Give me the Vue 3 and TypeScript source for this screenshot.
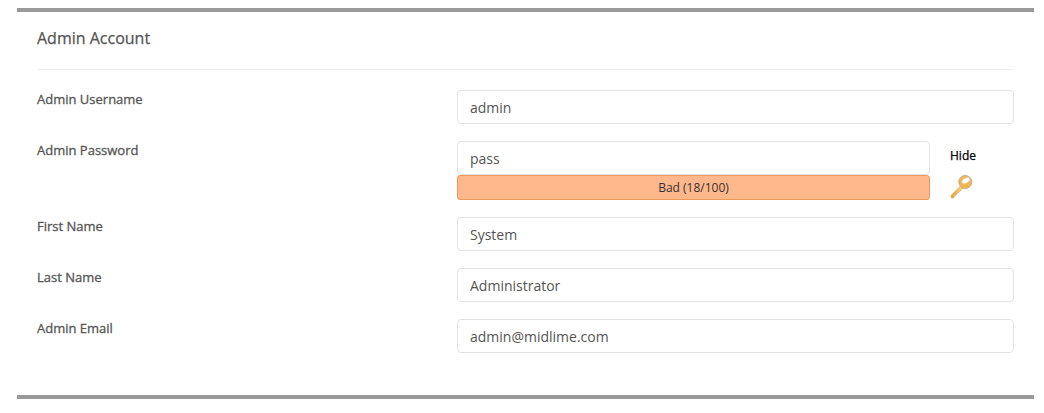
<template>
  <section class="panel">
    <h2 class="title">Admin Account</h2>

    <div v-for="field in fields" :key="field.label" class="row">
      <label class="label">{{ field.label }}</label>

      <div v-if="field.strength" class="password">
        <div class="password-main">
          <input class="input" type="text" :value="field.value" />
          <div class="meter">{{ field.strength }}</div>
        </div>
        <div class="password-side">
          <a class="hide">Hide</a>
          <svg class="key" width="24" height="24" viewBox="0 0 24 24">
            <defs>
              <linearGradient id="keyGold" x1="0" y1="1" x2="1" y2="0">
                <stop offset="0" stop-color="#e09a3a" />
                <stop offset="0.6" stop-color="#f8c25c" />
                <stop offset="1" stop-color="#ffe09a" />
              </linearGradient>
            </defs>
            <path d="M11 10.2 1 20.4l.2 2.4 2.2.1 1.2-1.3v-1.3h1.3l1-1.1v-1.2h1.2l5-5z" fill="url(#keyGold)" stroke="#d9a050" stroke-width=".5" />
            <circle cx="15.3" cy="7" r="6.5" fill="#f6b54a" stroke="#c9aa80" />
            <ellipse cx="15.9" cy="5.6" rx="4.4" ry="2.6" fill="#fff" stroke="#dcc49e" stroke-width=".7" transform="rotate(-30 15.9 5.6)" />
          </svg>
        </div>
      </div>

      <input v-else class="input" type="text" :value="field.value" />
    </div>
  </section>
</template>

<script setup lang="ts">
interface Field {
  label: string
  value: string
  strength?: string
}

const fields: Field[] = [
  { label: 'Admin Username', value: 'admin' },
  { label: 'Admin Password', value: 'pass', strength: 'Bad (18/100)' },
  { label: 'First Name', value: 'System' },
  { label: 'Last Name', value: 'Administrator' },
  { label: 'Admin Email', value: 'admin@midlime.com' }
]
</script>

<style>
html,
body {
  background: #fff;
}
</style>

<style scoped>
.panel {
  box-sizing: border-box;
  width: 1017px;
  height: 391px;
  margin: 8px 0 0 17px;
  padding: 0 20px;
  border-top: 4px solid #999;
  border-bottom: 4px solid #999;
  font-family: 'Open Sans', 'Liberation Sans', sans-serif;
  color: #555;
}

.title {
  height: 58px;
  margin: 0 0 20px;
  padding-top: 15px;
  box-sizing: border-box;
  border-bottom: 1px solid #eee;
  font-size: 16px;
  font-weight: 400;
  line-height: 22px;
  color: #555;
  -webkit-text-stroke: 0.25px #555;
}

.row {
  display: grid;
  grid-template-columns: 420px 557px;
  margin-bottom: 17px;
}

.label {
  font-size: 13px;
  font-weight: 400;
  line-height: 18px;
  color: #555;
  -webkit-text-stroke: 0.3px #555;
}

.input {
  display: block;
  box-sizing: border-box;
  width: 100%;
  height: 34px;
  padding: 0 12px;
  border: 1px solid #e3e3e3;
  border-radius: 4px;
  outline: none;
  background: #fff;
  font-family: inherit;
  font-size: 14px;
  color: #555;
}

.password {
  display: flex;
}

.password-main {
  width: 473px;
}

.meter {
  box-sizing: border-box;
  height: 25px;
  border: 1px solid #f0975a;
  border-radius: 3px;
  background: #ffb78c;
  font-size: 12px;
  line-height: 23px;
  text-align: center;
  color: #333;
}

.password-side {
  display: flex;
  flex-direction: column;
  padding: 7px 0 0 20px;
}

.hide {
  font-size: 12px;
  font-weight: 400;
  line-height: 16px;
  color: #000;
  -webkit-text-stroke: 0.25px #000;
}

.key {
  display: block;
  margin-top: 11px;
}
</style>
